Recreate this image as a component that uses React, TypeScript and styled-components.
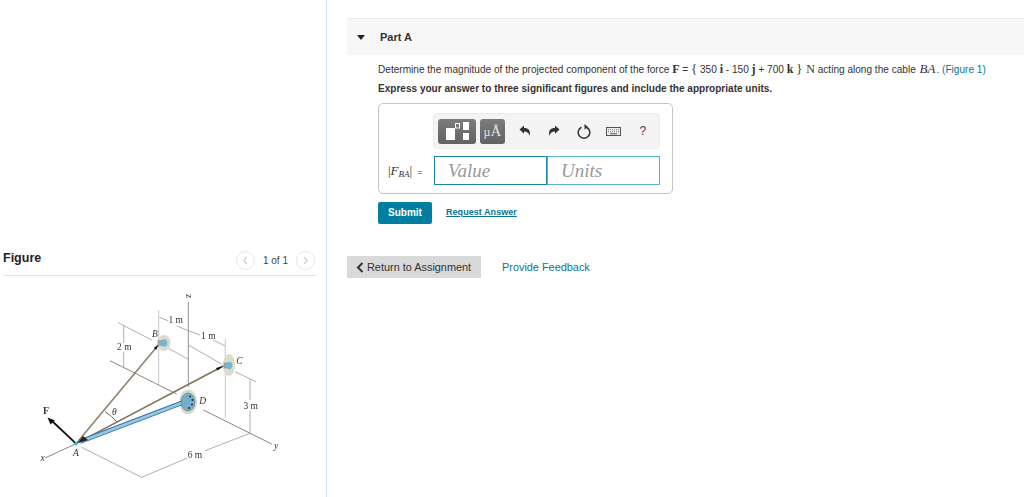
import React from "react";
import styled, { createGlobalStyle } from "styled-components";

const GlobalStyle = createGlobalStyle`
  html, body {
    margin: 0;
    padding: 0;
    background: #fff;
  }
  body {
    font-family: "Liberation Sans", Arial, sans-serif;
    color: #333;
  }
`;

const LINK = "#0b7396";

const App = () => {
  return (
    <Page>
      <GlobalStyle />
      <LeftPanel>
        <FigureHeader>
          <FigureTitle>Figure</FigureTitle>
          <Pager>
            <PagerButton>
              <Chevron points="6,2 2.5,6 6,10" />
            </PagerButton>
            <PagerText>1 of 1</PagerText>
            <PagerButton>
              <Chevron points="3,2 6.5,6 3,10" />
            </PagerButton>
          </Pager>
        </FigureHeader>
        <FigureDrawing />
      </LeftPanel>
      <RightPanel>
        <PartHeader>
          <Caret />
          <PartTitle>Part A</PartTitle>
        </PartHeader>
        <PartBody>
          <Question>
            Determine the magnitude of the projected component of the force <MathBold>F</MathBold> = <Brace>{"{"}</Brace> 350{" "}
            <MathBold>i</MathBold> - 150 <MathBold>j</MathBold> + 700 <MathBold>k</MathBold> <Brace>{"}"}</Brace>{" "}
            <MathRoman>N</MathRoman> acting along the cable <MathItalic>BA</MathItalic>. <InlineLink>(Figure 1)</InlineLink>
          </Question>
          <Instruction>Express your answer to three significant figures and include the appropriate units.</Instruction>
          <AnswerBox>
            <Toolbar>
              <ToolButton $width={38}>
                <TemplateIcon />
              </ToolButton>
              <ToolButton $width={25}>
                <UnitsGlyph>
                  <small>µ</small>Å
                </UnitsGlyph>
              </ToolButton>
              <ToolIcons>
                <ToolIcon>
                  <svg width="12" height="12" viewBox="0 0 12 12">
                    <path d="M0.500 4.500 5 0.500V3C9.500 3 12 5.500 10.500 11 9.800 8 8.500 6.500 5 6.500V8.800z" fill="#333" />
                  </svg>
                </ToolIcon>
                <ToolIcon>
                  <svg width="12" height="12" viewBox="0 0 12 12">
                    <path d="M11.500 4.500 7 0.500V3C2.500 3 0 5.500 1.500 11 2.200 8 3.500 6.500 7 6.500V8.800z" fill="#333" />
                  </svg>
                </ToolIcon>
                <ToolIcon>
                  <svg width="14" height="15" viewBox="0 0 14 15">
                    <path d="M4.500 3.200a5.800 5.800 0 1 0 5 0" fill="none" stroke="#333" strokeWidth="1.500" />
                    <path d="M7.500 0 11 3 7.500 5.600z" fill="#333" />
                  </svg>
                </ToolIcon>
                <ToolIcon>
                  <svg width="15" height="9" viewBox="0 0 15 9">
                    <rect x="0.500" y="0.500" width="14" height="8" fill="#eee" stroke="#555" />
                    <path d="M2 2.800h11M2 4.800h11" stroke="#777" strokeDasharray="1 1" />
                    <path d="M4 6.800h7" stroke="#555" />
                  </svg>
                </ToolIcon>
                <HelpMark>?</HelpMark>
              </ToolIcons>
            </Toolbar>
            <AnswerRow>
              <AnswerLabel>
                |<i>F</i>
                <sub>BA</sub>| <span>=</span>
              </AnswerLabel>
              <AnswerInput $active>Value</AnswerInput>
              <AnswerInput>Units</AnswerInput>
            </AnswerRow>
          </AnswerBox>
          <ActionRow>
            <SubmitButton>Submit</SubmitButton>
            <RequestLink>Request Answer</RequestLink>
          </ActionRow>
        </PartBody>
        <FooterRow>
          <ReturnButton>
            <svg width="8" height="11" viewBox="0 0 8 11">
              <path d="M6.500 1 2 5.500 6.500 10" fill="none" stroke="#333" strokeWidth="2" />
            </svg>
            Return to Assignment
          </ReturnButton>
          <FeedbackLink>Provide Feedback</FeedbackLink>
        </FooterRow>
      </RightPanel>
    </Page>
  );
};

const TemplateIcon = () => (
  <svg width="23" height="18" viewBox="0 0 23 18">
    <rect x="0" y="6" width="9" height="12" fill="#fff" />
    <rect x="9.500" y="1.500" width="4" height="4.500" fill="none" stroke="#fff" />
    <rect x="17" y="0" width="6" height="8" fill="#fff" />
    <rect x="17" y="11" width="6" height="7" fill="#fff" />
  </svg>
);

const FigureDrawing = () => (
  <Drawing viewBox="0 275 326 222">
    <g fill="none" stroke="#c9c9c9" strokeWidth="1">
      <path d="M158.700 310V385" />
      <path d="M225.300 339V418" />
    </g>
    <path d="M188.300 302V387" fill="none" stroke="#8f8f8f" strokeWidth="1" />
    <g fill="none" stroke="#6a6a6a" strokeWidth="0.800">
      <path d="M110 360.700 176.700 394" />
      <path d="M203.300 410 271.700 444" />
      <path d="M76 443.700 45 458" />
    </g>
    <g fill="none" stroke="#9a9a9a" strokeWidth="0.800">
      <path d="M118.300 322.700 151.700 340" />
      <path d="M166.700 347.300 188.300 359.300" />
      <path d="M188.300 345 221.700 364" />
      <path d="M235 371.700 256 381.700" />
      <path d="M159.300 317.300 168.300 320.700" />
      <path d="M176.700 326 188.300 330.700 200 335" />
      <path d="M213.300 340 225 346" />
      <path d="M123.700 326V342.700M123.700 351.700V367.300" />
      <path d="M250 379.300V400M250 410.700V434" />
      <path d="M81.700 447.300 141.700 477.300 186.700 458.300" />
      <path d="M205 450.700 250 433.300" />
    </g>

    <ellipse cx="164" cy="343" rx="6.500" ry="8" fill="#dcdbc9" />
    <ellipse cx="229" cy="365" rx="6" ry="11" fill="#dcdbc9" />
    <ellipse cx="188" cy="402" rx="9" ry="12.500" fill="#dcdbc9" />

    <path d="M76 443.700 158.300 345" stroke="#8b7d66" strokeWidth="1.500" />
    <path d="M76 443.700 223.300 366" stroke="#7f7159" strokeWidth="1.500" />
    <path d="M80 441.700 185 401.700" stroke="#3f6f92" strokeWidth="4.600" />
    <path d="M80 441.700 185 401.700" stroke="#8ecbee" strokeWidth="2.800" />

    <ellipse cx="188" cy="402" rx="7" ry="9" fill="#74aecb" stroke="#4d7a92" strokeWidth="0.600" />
    <g fill="#222">
      <circle cx="190" cy="396.500" r="0.900" />
      <circle cx="192.500" cy="400" r="0.900" />
      <circle cx="192" cy="404.500" r="0.900" />
      <circle cx="189" cy="408" r="0.900" />
    </g>
    <rect x="158" y="340.500" width="5" height="5" fill="#8fb0bd" stroke="#6c7f88" strokeWidth="0.400" />
    <ellipse cx="164.500" cy="343" rx="2.800" ry="3.800" fill="#6fb8dc" />
    <rect x="224" y="363" width="4" height="5" fill="#8fb0bd" stroke="#6c7f88" strokeWidth="0.400" />
    <ellipse cx="229.500" cy="365.500" rx="2.800" ry="3.800" fill="#6fb8dc" />

    <path d="M76 443.700 51 420" stroke="#111" strokeWidth="1.800" />
    <path d="M47.500 417.500 55 420.500 50.500 424.500z" fill="#111" />
    <path d="M158.300 345 153.800 347.800 156.200 350z" fill="#111" />
    <path d="M223.300 366 216 368 217.500 370.500z" fill="#111" />
    <path d="M88 440 78 443 83 436z" fill="#222" />
    <circle cx="76" cy="443.700" r="1.800" fill="#19c3dc" />
    <path d="M105 411.700Q112 416 116.700 421.700" fill="none" stroke="#444" strokeWidth="0.800" />

    <g fill="#333">
      <Label x={188.300} y={298} transform="rotate(90 188.300 296)">z</Label>
      <Label x={175.700} y={323}>1 m</Label>
      <Label x={208.300} y={339}>1 m</Label>
      <Label x={124.300} y={349.700}>2 m</Label>
      <Label x={250.700} y={408.700}>3 m</Label>
      <Label x={195} y={458}>6 m</Label>
      <Label x={155} y={336.500} $italic>B</Label>
      <Label x={239.300} y={363.500} $italic>C</Label>
      <Label x={202.700} y={403.500} $italic>D</Label>
      <Label x={114.300} y={415} $italic>θ</Label>
      <Label x={76} y={456} $italic>A</Label>
      <Label x={42.700} y={461} $italic>x</Label>
      <Label x={276} y={449} $italic>y</Label>
      <Label x={46} y={414} $bold>F</Label>
    </g>
  </Drawing>
);

const Page = styled.div`
  display: flex;
  width: 1024px;
  height: 497px;
  overflow: hidden;
`;

const LeftPanel = styled.div`
  box-sizing: border-box;
  width: 327px;
  height: 100%;
  padding-top: 246px;
  border-right: 1px solid #cfe0ee;
`;

const FigureHeader = styled.div`
  display: flex;
  align-items: center;
  justify-content: space-between;
  box-sizing: border-box;
  width: 313px;
  height: 30px;
  margin-left: 3px;
  border-bottom: 1px solid #e2e2e2;
`;

const FigureTitle = styled.div`
  font-size: 12.500px;
  font-weight: 700;
  color: #222;
  margin-top: -6px;
`;

const Pager = styled.div`
  display: flex;
  align-items: center;
  gap: 8px;
  margin-top: -1px;
  margin-right: 1px;
`;

const PagerButton = styled.svg.attrs({ viewBox: "-5 -4 19 20" })`
  box-sizing: border-box;
  width: 19px;
  height: 19px;
  border: 1px solid #e8e8e8;
  border-radius: 50%;
`;

const Chevron = styled.polyline`
  fill: none;
  stroke: #c4c4c4;
  stroke-width: 1.300;
`;

const PagerText = styled.span`
  font-size: 10px;
  color: #444;
`;

const Drawing = styled.svg`
  display: block;
  width: 326px;
  height: 222px;
  margin-top: -1px;
  filter: blur(0.25px);
`;

const Label = styled.text<{ $italic?: boolean; $bold?: boolean }>`
  font-family: "Liberation Serif", "Times New Roman", serif;
  font-size: ${(p) => (p.$bold ? "10px" : "9.500px")};
  font-style: ${(p) => (p.$italic ? "italic" : "normal")};
  font-weight: ${(p) => (p.$bold ? 700 : 400)};
  text-anchor: middle;
`;

const RightPanel = styled.div`
  flex: 1;
  min-width: 0;
  padding: 18px 0 0 20px;
`;

const PartHeader = styled.div`
  display: flex;
  align-items: center;
  height: 36px;
  padding-left: 10px;
  background: #f7f7f7;
  border-top: 1px solid #ececec;
`;

const Caret = styled.span`
  width: 0;
  height: 0;
  border-left: 4px solid transparent;
  border-right: 4px solid transparent;
  border-top: 5px solid #222;
`;

const PartTitle = styled.div`
  margin-left: 15px;
  font-size: 11px;
  font-weight: 700;
  color: #333;
`;

const PartBody = styled.div`
  padding: 4px 0 0 31px;
`;

const Question = styled.div`
  height: 20px;
  line-height: 20px;
  font-size: 10.080px;
  white-space: nowrap;
  color: #333;
`;

const MathBold = styled.b`
  font-family: "Liberation Serif", serif;
  font-size: 12px;
`;

const MathRoman = styled.span`
  margin-left: 1px;
  font-family: "Liberation Serif", serif;
  font-size: 12px;
`;

const MathItalic = styled.i`
  margin: 0 1px;
  font-family: "Liberation Serif", serif;
  font-size: 13px;
`;

const Brace = styled.span`
  font-family: "Liberation Serif", serif;
  font-size: 13px;
`;

const InlineLink = styled.span`
  color: ${LINK};
`;

const Instruction = styled.div`
  height: 20px;
  line-height: 20px;
  font-size: 10.050px;
  font-weight: 700;
  white-space: nowrap;
  color: #333;
`;

const AnswerBox = styled.div`
  box-sizing: border-box;
  width: 295px;
  height: 91px;
  margin-top: 4px;
  padding: 9px 12px 0 0;
  border: 1px solid #c4c4c4;
  border-radius: 5px;
`;

const Toolbar = styled.div`
  display: flex;
  align-items: center;
  gap: 4px;
  box-sizing: border-box;
  width: 227px;
  height: 36px;
  margin-left: 54px;
  padding-left: 4px;
  background: #f4f4f4;
  border: 1px solid #ebebeb;
  border-radius: 4px;
`;

const ToolButton = styled.div<{ $width: number }>`
  display: flex;
  align-items: center;
  justify-content: center;
  width: ${(p) => p.$width}px;
  height: 25px;
  background: linear-gradient(#7c7c7c, #626262);
  border-radius: 3px;
`;

const UnitsGlyph = styled.span`
  font-family: "Liberation Serif", serif;
  font-size: 15px;
  color: #e4e4e4;

  small {
    font-size: 12px;
  }
`;

const ToolIcons = styled.div`
  display: grid;
  grid-template-columns: repeat(5, 29.500px);
  align-items: center;
  justify-items: center;
  margin-left: 1px;
`;

const ToolIcon = styled.span`
  display: flex;
  align-items: center;
  justify-content: center;
`;

const HelpMark = styled.span`
  font-size: 12px;
  color: #444;
`;

const AnswerRow = styled.div`
  display: flex;
  align-items: center;
  margin-top: 7px;
`;

const AnswerLabel = styled.div`
  box-sizing: border-box;
  width: 55px;
  padding-left: 9px;
  font-family: "Liberation Serif", serif;
  font-size: 13px;
  white-space: nowrap;
  color: #333;

  sub {
    font-size: 9px;
    font-style: italic;
    vertical-align: -2px;
    line-height: 0;
  }

  span {
    margin-left: 2px;
    font-family: "Liberation Sans", sans-serif;
    font-size: 8px;
  }
`;

const AnswerInput = styled.div<{ $active?: boolean }>`
  box-sizing: border-box;
  width: 113px;
  height: 29px;
  padding-left: 13px;
  border: 1px solid ${(p) => (p.$active ? "#1c87a6" : "#5fb0c6")};
  font-family: "Liberation Serif", serif;
  font-size: 19px;
  font-style: italic;
  line-height: 27px;
  color: #999;
`;

const ActionRow = styled.div`
  display: flex;
  align-items: center;
  margin-top: 8px;
`;

const SubmitButton = styled.div`
  width: 54px;
  height: 22px;
  background: #027ea3;
  border-radius: 2px;
  font-size: 10px;
  font-weight: 700;
  line-height: 22px;
  text-align: center;
  color: #fff;
`;

const RequestLink = styled.span`
  margin: -2px 0 0 14px;
  font-size: 9px;
  font-weight: 700;
  letter-spacing: 0.050px;
  text-decoration: underline;
  color: ${LINK};
`;

const FooterRow = styled.div`
  display: flex;
  align-items: center;
  margin-top: 32px;
`;

const ReturnButton = styled.div`
  display: flex;
  align-items: center;
  gap: 3px;
  box-sizing: border-box;
  width: 134px;
  height: 22px;
  padding-left: 9px;
  background: #d9d9d9;
  font-size: 10.900px;
  color: #333;
`;

const FeedbackLink = styled.span`
  margin-left: 21px;
  font-size: 10.900px;
  color: ${LINK};
`;

export default App;
